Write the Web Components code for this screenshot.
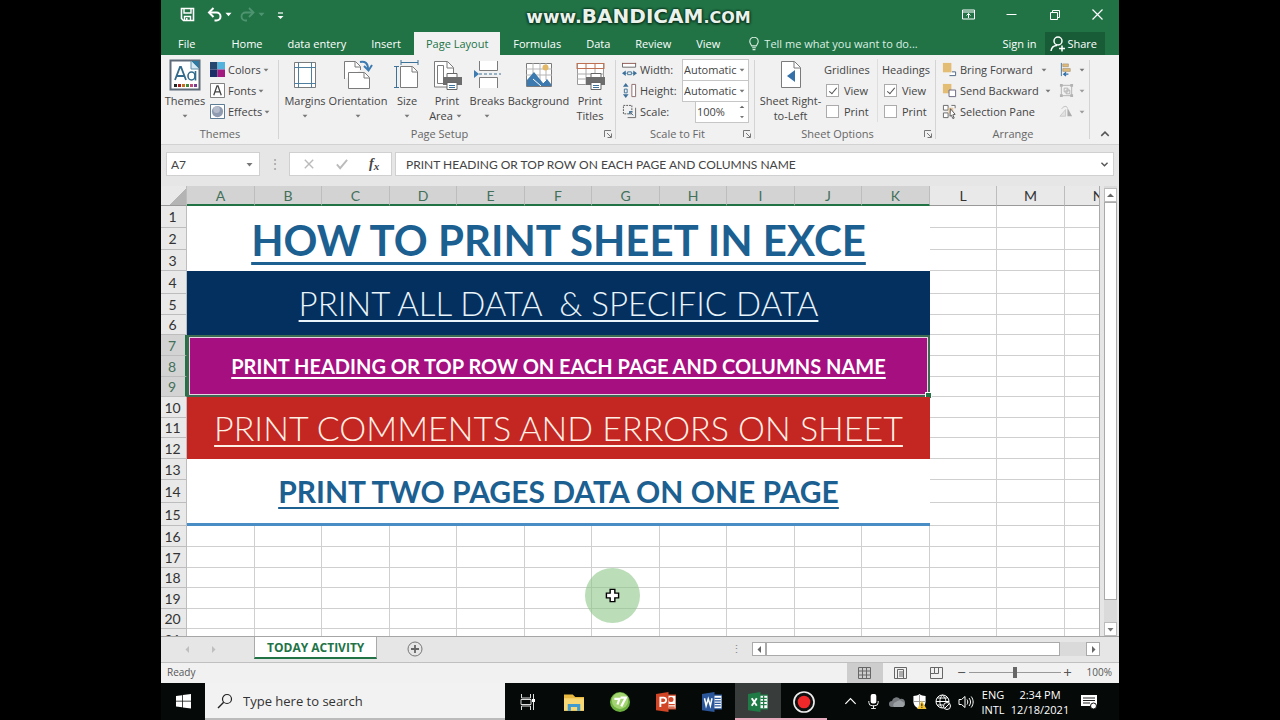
<!DOCTYPE html>
<html lang="en">
<head>
<meta charset="utf-8">
<title>Excel - Page Layout</title>
<style>
  html { background: #000; }
  body {
    margin: 0 auto;
    padding: 0 161px;
    height: 100vh;
    box-sizing: border-box;
    overflow: hidden;
    font: 11px/15px "Open Sans", "Noto Sans", sans-serif;
    color: #444;
    background: #000;
    --green: #217346;
    --line: #c6c6c6;
    --head: "Lato", "Open Sans", sans-serif;
  }
</style>
</head>
<body>
<xl-app></xl-app>

<script>
const ICONS = {
  save: `<path d="M1.500 1.500h12v12h-10l-2-2z" fill="none" stroke="#fff" stroke-width="1.600"/><path d="M4 2v4h7V2M4.500 13V9.500h6V13" fill="none" stroke="#fff" stroke-width="1.400"/><path d="M6 11h1.500v2H6z" fill="#fff"/>`,
  undo: `<path d="M2 5.500h7.500a4 4 0 0 1 0 8H7.500" fill="none" stroke="#fff" stroke-width="2"/><path d="M6.500 1L2 5.500 6.500 10" fill="none" stroke="#fff" stroke-width="2"/>`,
  redo: `<path d="M13 5.500H5.500a4 4 0 0 0 0 8H7" fill="none" stroke="#4f9470" stroke-width="1.800"/><path d="M9 1l4.500 4.500L9 10" fill="none" stroke="#4f9470" stroke-width="1.800"/>`,
  wcaret: `<path d="M4 5.500h7l-3.500 4z" fill="#fff"/>`,
  dimcaret: `<path d="M4 5.500h7l-3.500 4z" fill="#4f9470"/>`,
  custom: `<path d="M5 6h5" stroke="#fff" stroke-width="1.200"/><path d="M4.500 9h6l-3 3z" fill="#fff"/>`,
  ribbonopt: `<path d="M1.500 3h12v9h-12zM1.500 5h12" fill="none" stroke="#fff"/><path d="M7.500 11V6.500M5.500 8.500l2-2 2 2" fill="none" stroke="#fff"/>`,
  min: `<path d="M2.500 7.500h10" stroke="#fff"/>`,
  restore: `<path d="M3.500 5.500h7v7h-7z M5.500 5.500v-2h7v7h-2" fill="none" stroke="#fff"/>`,
  close: `<path d="M2.500 2.500l10 10M12.500 2.500l-10 10" stroke="#fff" stroke-width="1.200"/>`,
  bulb: `<path d="M5 9.500C4.500 8 3 7 3 4.800a4.500 4.500 0 0 1 9 0C12 7 10.500 8 10 9.500zM5.500 11.500h4M6 13.500h3" fill="none" stroke="#dcefe3" stroke-width="1.200"/>`,
  person: `<circle cx="8" cy="5" r="4" fill="none" stroke="#fff" stroke-width="1.500"/><path d="M1 15c.5-3.500 3-5.500 6-5.500M12 9.500v6M9 12.500h6" fill="none" stroke="#fff" stroke-width="1.500"/>`,
  themes: `<path d="M1.500 1.500h29v29h-29z" fill="#fff" stroke="#5f6b78" stroke-width="2"/><path d="M22 2h8v8z" fill="#2f7aa3"/><path d="M22 2v8h8" fill="#d7e9f3" stroke="#5f8fa8"/><path d="M6 21l5-13h1l5 13M8 17h7" fill="none" stroke="#336b8c" stroke-width="1.800"/><ellipse cx="22.500" cy="17" rx="3.500" ry="4" fill="none" stroke="#336b8c" stroke-width="1.600"/><path d="M26.500 12v9.500" stroke="#336b8c" stroke-width="1.600"/><path d="M5 25h3v3H5z" fill="#222"/><path d="M9 25h3v3H9z" fill="#a02020"/><path d="M13 25h3v3h-3z" fill="#c07020"/><path d="M17 25h3v3h-3z" fill="#3c8a3c"/><path d="M21 25h3v3h-3z" fill="#c04a80"/><path d="M25 25h3v3h-3z" fill="#7a3c90"/>`,
  colors: `<path d="M0 0h8v8H0z" fill="#24466f"/><path d="M8 0h8v8H8z" fill="#53b3dc"/><path d="M0 8h8v8H0z" fill="#1b2f66"/><path d="M8 8h8v8H8z" fill="#a3197f"/>`,
  fonts: `<path d="M.5.5h15v15H.5z" fill="#fff" stroke="#777"/><path d="M4 13L7.500 3h1L12 13M5.500 9.500h5" fill="none" stroke="#444" stroke-width="1.400"/>`,
  effects: `<path d="M.5.5h15v15H.5z" fill="#fff" stroke="#4d6f8c"/><circle cx="8" cy="8" r="6" fill="#8e9bb0"/><circle cx="7" cy="6" r="3.500" fill="#b4bccb"/>`,
  margins: `<path d="M5.500 3.500h21v25h-21z" fill="#fff" stroke="#7b7b7b"/><path d="M5 8.500h22M5 24.500h22M9.500 3v26M22.500 3v26" stroke="#4f7f9e"/>`,
  orient: `<path d="M2.500 20V2.500h11l5 5V11" fill="#fff" stroke="#7b7b7b"/><path d="M13 3v5h5" fill="none" stroke="#7b7b7b"/><path d="M6.500 13.500h16l5 5v11h-21z" fill="#fff" stroke="#7b7b7b"/><path d="M22 14v5h5" fill="none" stroke="#7b7b7b"/><path d="M18 3c5-1 8 1 8 7" fill="none" stroke="#3c7ab0" stroke-width="2"/><path d="M22 7l4.500 4.500L30 6" fill="none" stroke="#3c7ab0" stroke-width="2"/>`,
  size: `<path d="M9.500 7.500h12l5 5v16h-17z" fill="#fff" stroke="#7b7b7b"/><path d="M21 8v5h5" fill="none" stroke="#7b7b7b"/><path d="M10 3.500h17M10 1v5M27 1v5M5.500 7v22M3 7.500h5M3 28.500h5" stroke="#3f7298"/>`,
  printarea: `<path d="M3.500 2.500h13l6 6V28h-19z" fill="#fff" stroke="#7b7b7b"/><path d="M16 3v6h6M6.500 6.500v18h6v-18z" fill="none" stroke="#7b7b7b"/><path d="M16 14.500h10v5H16z" fill="#fff" stroke="#666"/><path d="M12 18h19v8H12z" fill="#6d6d6d"/><path d="M16 23.500h10v7H16z" fill="#fff" stroke="#666"/><path d="M18 26.500h6M18 28.500h6" stroke="#3f7298"/>`,
  breaks: `<path d="M8.500 2v9.500h18V2M8.500 29V18.500h18V29" fill="#fff" stroke="#7b7b7b"/><path d="M8 15h22" stroke="#3f7298" stroke-dasharray="3 2"/><path d="M3 11l5 4-5 4z" fill="#3c7ab0"/>`,
  background: `<path d="M3.500 4.500h25v23h-25z" fill="#fff" stroke="#7b7b7b"/><path d="M3 10h26M3 16h26M10 4v23M17 4v23M23 4v23" stroke="#b5b5b5"/><circle cx="22.500" cy="8.500" r="3" fill="#e2b866"/><path d="M4 27V21l7-8 9 11 4-4 4 5v2z" fill="#3c7ab0"/><path d="M20 24l3-3M10 20l8 7" stroke="#fff"/>`,
  titles: `<path d="M3.500 4.500h26v21h-26z" fill="#fff" stroke="#9a9a9a"/><path d="M3 9.500h27M3 4.500h27M3 4v6M12 4v6M21 4v6M30 4v6" stroke="#bd7152"/><path d="M3 15h27M3 20h27M12 10v16M21 10v16" stroke="#aaa"/><path d="M17 14.500h10v5H17z" fill="#fff" stroke="#666"/><path d="M12 18h19v8H12z" fill="#6d6d6d"/><path d="M17 23.500h10v7H17z" fill="#fff" stroke="#666"/><path d="M19 26.500h6M19 28.500h6" stroke="#3f7298"/>`,
  width: `<path d="M.5 1v4.500h14V1" fill="#fff" stroke="#666"/><path d="M0 1.500h15" stroke="#8d5a52"/><path d="M6 10.500h4v3H6zM1.500 12H5M11 12h3.500" fill="none" stroke="#3f7298"/><path d="M4 9l-4 3 4 3zM12 9l4 3-4 3z" fill="#3c6f99"/>`,
  height: `<path d="M10.500 1.500h4v13h-4z" fill="#fff" stroke="#8d6a6a"/><path d="M2.500 6.500h3v4h-3z" fill="none" stroke="#3f7298"/><path d="M4 0l3 4H1zM4 16l3-4H1z" fill="#3c6f99"/>`,
  scale: `<path d="M1.500 1.500h9v9h-9z" fill="none" stroke="#555" stroke-dasharray="2 1"/><path d="M6 14.500h8.500V4" fill="none" stroke="#666"/><path d="M8 8l4 4M8 11V8h3" fill="none" stroke="#3f7298"/>`,
  rtl: `<path d="M6.500 2.500h13l6 6v20h-19z" fill="#fff" stroke="#7b7b7b"/><path d="M19 3v6h6" fill="none" stroke="#7b7b7b"/><path d="M20 11v12l-8-6z" fill="#3570a8"/>`,
  forward: `<path d="M10.500 10.500h4v4H8" fill="#fff" stroke="#4c6480"/><path d="M1 1h9v10H1z" fill="#e3bd74"/>`,
  backward: `<path d="M1 1h9v10H1z" fill="#e3bd74"/><path d="M7.500 7.500h7v7h-7z" fill="#fff" stroke="#6b6280"/>`,
  selpane: `<path d="M1.500 1.500h5v5h-5zM1.500 9.500h5v5h-5zM10 1.500h4v3" fill="#fff" stroke="#666"/><path d="M7 4h5v6H7z" fill="#e9c79a"/><path d="M9 5l5 6-2.500.5L13 15l-1.500.5-1.500-3.500L8.500 13z" fill="#fff" stroke="#555"/>`,
  align: `<path d="M2.500 1v14" stroke="#3f7298"/><path d="M4 2h6v3H4zM4 7h8v3H4z" fill="#e0bb7a" stroke="#9a8a6c" stroke-width=".6"/><path d="M10 13H5M7.500 11L5 13l2.500 2" fill="none" stroke="#2f6fa8" stroke-width="1.300"/>`,
  group: `<path d="M2.500 2.500h11v11h-11zM5.500 5.500h4v4h-4zM7.500 7.500h4v4h-4z" fill="none" stroke="#999"/><path d="M1 1h3v3H1zM12 1h3v3h-3zM1 12h3v3H1zM12 12h3v3h-3z" fill="#999"/>`,
  rotate: `<path d="M1 13l6-7v7z" fill="#ddd" stroke="#bbb"/><path d="M9 4l5 9H9z" fill="#909090"/><path d="M3 5c2-3 5-3 6-1" fill="none" stroke="#a0a0a0"/>`,
  launcher: `<path d="M1.500 8V1.500H8" fill="none" stroke="#777"/><path d="M4 4l4 4M8.500 4.500v4h-4" fill="none" stroke="#777"/>`,
  up: `<path d="M3.500 9.500l4-4 4 4" fill="none" stroke="#555" stroke-width="1.600"/>`,
  down: `<path d="M4 5.500l3.500 3.500L11 5.500" fill="none" stroke="#555" stroke-width="1.600"/>`,
  caret: `<path d="M4.500 6h6l-3 3.500z" fill="#777"/>`,
  tup: `<path d="M4 9h7L7.500 5.500z" fill="#666"/>`,
  tleft: `<path d="M9 4v7L5.500 7.500z" fill="#666"/>`,
  tright: `<path d="M6 4v7l3.500-3.500z" fill="#666"/>`,
  cross: `<path d="M3 3l9 9M12 3l-9 9" stroke="#bbb" stroke-width="1.500"/>`,
  tick: `<path d="M2 8l3.500 4L13 3" fill="none" stroke="#bbb" stroke-width="2"/>`,
  plus: `<circle cx="8" cy="8" r="7" fill="none" stroke="#777"/><path d="M8 4v8M4 8h8" stroke="#666" stroke-width="1.800"/>`,
  normal: `<path d="M1.500 2.500h12v11h-12zM1 6h13M1 10h13M5.500 2v12M9.500 2v12" fill="none" stroke="#666"/>`,
  page: `<path d="M1.500 2.500h12v11h-12zM4.500 4.500h6v9h-6zM6 7h4M6 9h4M6 11h4" fill="none" stroke="#666"/>`,
  pbreak: `<path d="M1.500 2.500h12v11h-12zM5.500 2v6.500h-4M9.500 2v6.500h-4" fill="none" stroke="#666"/>`,
  windows: `<path d="M0 2.200l6.500-1v6H0zM7.300 1L16 0v7.200H7.300zM0 8h6.500v6.200l-6.500-1zM7.300 8H16v7.500l-8.700-1.200z" fill="#fff"/>`,
  search: `<circle cx="10" cy="6" r="4.500" fill="none" stroke="#222" stroke-width="1.200"/><path d="M6.700 9.300L1 15" stroke="#222" stroke-width="1.400"/>`,
  taskview: `<path d="M1.500 0v4h9V0M1.500 16v-4h9v4M1 5.500h10v5H1zM13.500 0v16" fill="none" stroke="#ddd"/><path d="M12 5h3v3h-3z" fill="#fff"/>`,
  folder: `<path d="M0 2h7l2 2h7v11H0z" fill="#e9b93f"/><path d="M0 5h16v10H0z" fill="#f8d775"/><path d="M3 15V9.500h10V15h-2.500v-3h-5v3z" fill="#3f9bd0"/>`,
  cam: `<circle cx="8" cy="8" r="8" fill="#6db13f"/><circle cx="8" cy="7" r="6.500" fill="#a4d472"/><path d="M3.500 5.500h4L6 10M8.500 4.500h4.200L9 11.500" fill="none" stroke="#fff" stroke-width="1.800"/>`,
  ppt: `<path d="M8 2.500h8v11H8z" fill="#fff" stroke="#d04525"/><circle cx="12" cy="6" r="2" fill="#d04525"/><path d="M10 10h5M10 12h5" stroke="#d04525"/><path d="M0 1.500L10 0v16L0 14.500z" fill="#d04525"/><path d="M3.500 12V4.500H6a2 2 0 0 1 0 4.200H3.500" fill="none" stroke="#fff" stroke-width="1.500"/>`,
  word: `<path d="M8 2.500h8v11H8z" fill="#fff" stroke="#2b579a"/><path d="M10 5h5M10 7h5M10 9h5M10 11h5" stroke="#2b579a"/><path d="M0 1.500L10 0v16L0 14.500z" fill="#2b579a"/><path d="M2 5l1.300 6L5 5.500 6.700 11 8 5" fill="none" stroke="#fff" stroke-width="1.200"/>`,
  excel: `<path d="M8 2.500h8v11H8z" fill="#fff" stroke="#1f7a45"/><path d="M10 5h5M10 7.500h5M10 10h5M12.500 3v10" stroke="#1f7a45"/><path d="M0 1.500L10 0v16L0 14.500z" fill="#1f7a45"/><path d="M3 5l4 6M7 5l-4 6" stroke="#fff" stroke-width="1.500"/>`,
  record: `<circle cx="8" cy="8" r="7.300" fill="#111" stroke="#eee" stroke-width="1.200"/><circle cx="8" cy="8" r="4.600" fill="#f0282a"/>`,
  chevron: `<path d="M2.500 10.500L8 5l5.500 5.500" fill="none" stroke="#fff" stroke-width="1.300"/>`,
  mic: `<rect x="5" y="0" width="6" height="10" rx="2" fill="#fff"/><path d="M3 7.500v1.500a3.500 3.500 0 0 0 3.500 3.500h3A3.500 3.500 0 0 0 13 9V7.500M8 12.500V15M5.500 15.500h5" fill="none" stroke="#fff"/>`,
  cloud: `<path d="M3 13a3 3 0 0 1 0-6 4.500 4.500 0 0 1 8-2 4 4 0 0 1 2 8z" fill="#777b80"/><path d="M5 13a3 3 0 0 1 2-5 4 4 0 0 1 6-.5 3 3 0 0 1 1 5.500z" fill="#9ba0a4"/>`,
  shield: `<path d="M8 0c2 1.500 4 2 6.500 2v6c0 4-3 6.500-6.500 8-3.500-1.500-6.500-4-6.500-8V2C4 2 6 1.500 8 0z" fill="#fff"/><path d="M8 1v14M2 8h12" stroke="#999"/><path d="M10.500 7l5 9h-10z" fill="#f4c331"/><path d="M10.500 10v3M10.500 14v1" stroke="#222" stroke-width="1.200"/>`,
  globe: `<circle cx="7.500" cy="7.500" r="6.500" fill="none" stroke="#fff"/><path d="M1 7.500h13M7.500 1C4 4 4 11 7.500 14M7.500 1c3.500 3 3.500 6 3 7M2.500 4h10M2.500 11H8" fill="none" stroke="#fff"/><circle cx="12" cy="12" r="3.500" fill="#111" stroke="#fff"/><path d="M9.800 14.200l4.400-4.400" stroke="#fff"/>`,
  sound: `<path d="M1 5.500h2.500L7 2.500v11l-3.500-3H1zM9 5.500c1 1.500 1 3.500 0 5M11 4c2 2.500 2 5.500 0 8M13.200 2.500c2.600 3.500 2.600 7.500 0 11" fill="none" stroke="#fff"/>`,
  notes: `<path d="M0 1h16v11h-2l-3 3v-3H0z" fill="#fff"/><path d="M2 4h12M2 6.500h12M2 9h7" stroke="#222"/><circle cx="12.500" cy="12" r="3" fill="#fff" stroke="#111"/>`,
  cell: `<path d="M5.500 1.500h5v4h4v5h-4v4h-5v-4h-4v-5h4z" fill="#fff" stroke="#000" stroke-width="1.500"/>`
};

// each component is a shadow root filled from one template string
function define(name, template) {
  window.customElements.define(name, class extends HTMLElement {
    constructor() {
      super();
      this.attachShadow({mode: 'open'});
    }
    connectedCallback() {
      this.shadowRoot.innerHTML = typeof template == 'function' ? template(this) : template;
    }
  });
}

const BUTTON = `
  button {
    font: inherit; color: inherit; background: none; border: 0; margin: 0; padding: 0;
    display: flex; align-items: center; justify-content: center; cursor: pointer; white-space: nowrap;
  }`;

define('x-icon', el => {
  const size = el.getAttribute('size') || 15;
  const box = el.getAttribute('box') || 15;
  return `
  <style>
    :host { display: inline-flex; flex: none; }
    svg { display: block; }
  </style>
  <svg width="${size}" height="${size}" viewBox="0 0 ${box} ${box}" aria-hidden="true">${ICONS[el.getAttribute('name')]}</svg>`;
});

define('xl-titlebar', `
  <style>
    :host { display: grid; grid-template-columns: 1fr auto 1fr; align-items: start; height: 32px; background: var(--green); color: #fff; }
    ${BUTTON}
    .side { display: flex; align-items: center; height: 28px; }
    .quick { padding-left: 19px; }
    .first { margin-right: 7px; }
    .gap { margin-left: 5px; }
    .window { justify-content: flex-end; }
    .window button { width: 43px; height: 28px; }
    .mark {
      font: bold 20px/32px "DejaVu Sans", sans-serif; color: #e9f3ec; white-space: nowrap;
      padding-right: 3px;
      text-shadow: 0 0 3px #0b2d19, 0 1px 3px #0b2d19, 0 0 2px #0b2d19;
    }
    .mark span { font-size: 18px; }
    .mark small { font-size: 16px; }
  </style>
  <div class="side quick">
    <button class="first" aria-label="Save"><x-icon name="save"></x-icon></button>
    <button class="gap" aria-label="Undo"><x-icon name="undo"></x-icon><x-icon name="wcaret" size="13"></x-icon></button>
    <button class="gap" aria-label="Redo"><x-icon name="redo"></x-icon><x-icon name="dimcaret" size="13"></x-icon></button>
    <button class="gap" aria-label="Customize Quick Access Toolbar"><x-icon name="custom"></x-icon></button>
  </div>
  <div class="mark"><span>www.</span>BANDICAM<small>.COM</small></div>
  <div class="side window">
    <button aria-label="Ribbon Display Options"><x-icon name="ribbonopt"></x-icon></button>
    <button aria-label="Minimize"><x-icon name="min"></x-icon></button>
    <button aria-label="Restore Down"><x-icon name="restore"></x-icon></button>
    <button aria-label="Close"><x-icon name="close"></x-icon></button>
  </div>`);

define('xl-tabs', `
  <style>
    :host { display: flex; height: 23px; background: var(--green); color: #fff; padding: 0 14px 0 5px; }
    ${BUTTON}
    nav { display: flex; gap: 1px; flex: 1; }
    nav button { padding: 0 12px; }
    nav .file { padding-right: 23px; }
    nav .on { background: #f1f1f1; color: var(--green); }
    nav .tell { padding: 0; margin-left: 14px; gap: 3px; color: #dcefe3; }
    .share { background: #185c37; padding: 0 8px 0 5px; margin-left: 9px; gap: 1px; }
  </style>
  <nav>
    <button class="file">File</button>
    <button>Home</button>
    <button>data entery</button>
    <button>Insert</button>
    <button class="on">Page Layout</button>
    <button>Formulas</button>
    <button>Data</button>
    <button>Review</button>
    <button>View</button>
    <button class="tell"><x-icon name="bulb" size="14"></x-icon>Tell me what you want to do...</button>
  </nav>
  <button>Sign in</button>
  <button class="share"><x-icon name="person" size="16" box="16"></x-icon>Share</button>`);

define('xl-group', el => `
  <style>
    :host { display: flex; flex-direction: column; box-sizing: border-box; flex: none; position: relative; }
    .body { display: flex; height: 67px; padding-top: 4px; }
    footer { display: flex; height: 15px; align-items: center; color: #666; }
    footer span { flex: 1; text-align: center; }
    :host::after { content: ""; position: absolute; right: 0; top: 5px; bottom: 5px; border-right: 1px solid #d4d4d4; }
    ${BUTTON}
    button { padding: 0 3px; }
  </style>
  <div class="body"><slot></slot></div>
  <footer><span>${el.getAttribute('label')}</span>${el.hasAttribute('launcher')
    ? `<button aria-label="${el.getAttribute('label')} settings"><x-icon name="launcher" size="10" box="10"></x-icon></button>` : ''}</footer>`);

define('xl-big', el => `
  <style>
    :host { display: block; flex: none; }
    ${BUTTON}
    button { flex-direction: column; width: 100%; justify-content: flex-start; }
    x-icon { margin-bottom: 2px; }
    .two { display: flex; align-items: center; height: 15px; }
    .two x-icon { margin: 0; }
  </style>
  <button>
    <x-icon name="${el.getAttribute('icon')}" size="32" box="32"></x-icon>
    <slot></slot>
    <span class="two"><slot name="second"></slot>${el.hasAttribute('caret') ? '<x-icon name="caret" size="12"></x-icon>' : ''}</span>
  </button>`);

define('xl-small', el => `
  <style>
    :host { display: flex; height: 21px; ${el.hasAttribute('disabled') ? 'opacity: .7;' : ''} }
    ${BUTTON}
    button { gap: 3px; }
    .caret { margin-left: var(--caret-gap, -4px); }
  </style>
  <button>
    <x-icon name="${el.getAttribute('icon')}" box="16"></x-icon>
    <span><slot></slot></span>
    ${el.hasAttribute('caret') ? '<x-icon class="caret" name="caret" size="12"></x-icon>' : ''}
  </button>`);

define('xl-fit', el => {
  const field = el.getAttribute('kind') == 'spin'
    ? `<span class="box spin"><input id="f" value="100%"><span class="arrows"><x-icon name="tup" size="10"></x-icon><x-icon name="caret" size="10"></x-icon></span></span>`
    : `<span class="box"><select id="f"><option>Automatic</option></select><x-icon class="drop" name="caret" size="12"></x-icon></span>`;
  return `
  <style>
    :host { display: flex; align-items: center; height: 21px; }
    label { display: flex; align-items: center; gap: 3px; flex: 1; }
    .box { display: flex; align-items: center; box-sizing: border-box; width: 67px; height: 22px; background: #fff; border: 1px solid var(--line); }
    .spin { width: 54px; }
    .drop { margin-left: -4px; }
    select, input {
      appearance: none; flex: 1; min-width: 0; font: inherit; color: inherit; background: none;
      border: 0; padding: 0 0 0 1px; margin: 0; outline: 0;
    }
    .arrows { display: flex; flex-direction: column; padding-right: 1px; }
  </style>
  <label for="f"><x-icon name="${el.getAttribute('icon')}" box="16"></x-icon>${el.getAttribute('label')}</label>${field}`;
});

define('xl-check', el => `
  <style>
    :host { display: block; }
    label { display: flex; align-items: center; gap: 5px; height: 21px; }
    input {
      appearance: none; width: 13px; height: 13px; box-sizing: border-box; margin: 0;
      border: 1px solid #ababab; background: #fff; display: grid; place-items: center;
    }
    input:checked::after {
      content: ""; width: 3px; height: 7px; margin-bottom: 2px; border: solid #555; border-width: 0 1px 1px 0; transform: rotate(40deg);
    }
  </style>
  <label><input type="checkbox" ${el.hasAttribute('checked') ? 'checked' : ''}><slot></slot></label>`);

define('xl-ribbon', `
  <style>
    :host { display: flex; height: 89px; background: #f1f1f1; border-bottom: 1px solid #d2d2d2; }
    .col { display: flex; flex-direction: column; }
    .themes { width: 118px; }
    .setup { width: 337px; }
    .fit { width: 139px; }
    .sheet { width: 181px; }
    .arrange { width: 154px; }
    .w40 { width: 40px; } .w48 { width: 48px; } .w58 { width: 58px; } .w63 { width: 63px; }
    .pad { margin-left: 2px; }
    .rtl { margin-left: 4px; }
    .pick { padding-left: 1px; }
    .fields { flex: 1; padding: 0 6px; }
    .opt { padding-left: 6px; border-left: 1px solid #dedede; height: 63px; width: 49px; }
    .opt.first { border: 0; padding-left: 4px; width: 51px; }
    .opt span { height: 21px; line-height: 21px; margin-left: -2px; }
    .order { padding-left: 6px; width: 117px; --caret-gap: 0; }
    .more { flex: 1; }
    .fold { flex: 1; display: flex; align-items: flex-end; justify-content: center; padding-bottom: 3px; }
    ${BUTTON}
  </style>
  <xl-group class="themes" label="Themes">
    <xl-big class="w48" icon="themes" caret>Themes</xl-big>
    <div class="col pick">
      <xl-small icon="colors" caret>Colors</xl-small>
      <xl-small icon="fonts" caret>Fonts</xl-small>
      <xl-small icon="effects" caret>Effects</xl-small>
    </div>
  </xl-group>
  <xl-group class="setup" label="Page Setup" launcher>
    <xl-big class="w48 pad" icon="margins" caret>Margins</xl-big>
    <xl-big class="w58" icon="orient" caret>Orientation</xl-big>
    <xl-big class="w40" icon="size" caret>Size</xl-big>
    <xl-big class="w40" icon="printarea" caret>Print<span slot="second">Area</span></xl-big>
    <xl-big class="w40" icon="breaks" caret>Breaks</xl-big>
    <xl-big class="w63" icon="background">Background</xl-big>
    <xl-big class="w40" icon="titles">Print<span slot="second">Titles</span></xl-big>
  </xl-group>
  <xl-group class="fit" label="Scale to Fit" launcher>
    <div class="col fields">
      <xl-fit icon="width" label="Width:"></xl-fit>
      <xl-fit icon="height" label="Height:"></xl-fit>
      <xl-fit icon="scale" label="Scale:" kind="spin"></xl-fit>
    </div>
  </xl-group>
  <xl-group class="sheet" label="Sheet Options" launcher>
    <xl-big class="w63 rtl" icon="rtl">Sheet Right-<span slot="second">to-Left</span></xl-big>
    <div class="col opt first">
      <span>Gridlines</span>
      <xl-check checked>View</xl-check>
      <xl-check>Print</xl-check>
    </div>
    <div class="col opt">
      <span>Headings</span>
      <xl-check checked>View</xl-check>
      <xl-check>Print</xl-check>
    </div>
  </xl-group>
  <xl-group class="arrange" label="Arrange">
    <div class="col order">
      <xl-small icon="forward" caret>Bring Forward&nbsp;</xl-small>
      <xl-small icon="backward" caret>Send Backward</xl-small>
      <xl-small icon="selpane">Selection Pane</xl-small>
    </div>
    <div class="col more">
      <xl-small icon="align" caret></xl-small>
      <xl-small icon="group" caret disabled></xl-small>
      <xl-small icon="rotate" caret disabled></xl-small>
    </div>
  </xl-group>
  <div class="fold"><button aria-label="Collapse the Ribbon"><x-icon name="up" size="14"></x-icon></button></div>`);

define('xl-formula', `
  <style>
    :host { display: flex; height: 24px; padding: 7px 5px 10px; background: #e6e6e6; font-family: var(--head); font-size: 12px; }
    ${BUTTON}
    .box { display: flex; align-items: center; box-sizing: border-box; background: #fff; border: 1px solid #d0d0d0; padding: 0 2px; }
    .name { width: 94px; }
    .dots { width: 29px; text-align: center; line-height: 24px; color: #999; }
    .tools { width: 103px; justify-content: space-around; }
    .text { flex: 1; margin-left: 3px; }
    .text input { padding-left: 8px; }
    input { flex: 1; min-width: 0; border: 0; outline: 0; background: none; padding: 0 2px; font: inherit; color: inherit; }
    i { font: italic bold 14px "Liberation Serif", serif; }
    sub { font-size: 11px; vertical-align: -2px; }
  </style>
  <div class="box name"><input aria-label="Name Box" value="A7"><x-icon name="caret"></x-icon></div>
  <span class="dots">⋮</span>
  <div class="box tools">
    <button aria-label="Cancel"><x-icon name="cross" size="14"></x-icon></button>
    <button aria-label="Enter"><x-icon name="tick" size="14"></x-icon></button>
    <button aria-label="Insert Function"><i>f<sub>x</sub></i></button>
  </div>
  <div class="box text">
    <input aria-label="Formula Bar" value="PRINT HEADING OR TOP ROW ON EACH PAGE AND COLUMNS NAME">
    <button aria-label="Expand Formula Bar"><x-icon name="down" size="13"></x-icon></button>
  </div>`);

const BANDS = {
  1: ['title', 'HOW TO PRINT SHEET IN EXCE'],
  4: ['navy', 'PRINT ALL DATA&nbsp; &amp; SPECIFIC DATA'],
  7: ['purple', 'PRINT HEADING OR TOP ROW ON EACH PAGE AND COLUMNS NAME'],
  10: ['red', 'PRINT COMMENTS AND ERRORS ON SHEET'],
  13: ['last', 'PRINT TWO PAGES DATA ON ONE PAGE']
};
const HEIGHTS = [22, 22, 21, 23, 21, 20, 21, 21, 20, 21, 20, 21, 21, 23, 23, 21, 21, 20, 21, 20, 21];

function sheetRows() {
  return HEIGHTS.map((h, i) => {
    const row = i + 1;
    const band = BANDS[row];
    let cells = '';
    if (band) cells += `<td class="band ${band[0]}" colspan="11" rowspan="3"><span>${band[1]}</span></td>`;
    cells += '<td></td>'.repeat(row > 15 ? 14 : 3);
    return `<tr style="height:${h}px"><th scope="row" class="${row > 6 && row < 10 ? 'on' : ''}">${row}</th>${cells}</tr>`;
  }).join('');
}

define('xl-sheet', `
  <style>
    :host { display: flex; flex: 1; min-height: 0; background: #e6e6e6; padding-right: 2px; }
    .view { flex: 1; min-width: 0; overflow: hidden; position: relative; background: #fff; border-right: 1px solid #aaa; }
    table { table-layout: fixed; width: 971px; border-collapse: separate; border-spacing: 0; font: 14px/17px var(--head); }
    .rowhead { width: 26px; }
    .odd { width: 68px; }
    .even { width: 67px; }
    th, td { box-sizing: border-box; padding: 0; border: solid #cfcfcf; border-width: 0 1px 1px 0; }
    th { font-weight: 400; background: #e9e9e9; color: #333; border-color: #bdbdbd; }
    thead tr { height: 20px; }
    thead th { border-bottom: 1px solid #999; }
    thead th.on { background: #d3d3d3; color: #44705a; border-bottom: 2px solid var(--green); }
    tbody th { padding-right: 2px; }
    tbody th.on { background: #d3d3d3; color: #44705a; border-right: 2px solid var(--green); }
    .corner { background: linear-gradient(135deg, #e9e9e9 62%, #b4b4b4 62%); }
    .band { text-align: center; border: 0; position: relative; white-space: nowrap; line-height: 1; }
    .band span { text-decoration: underline; text-decoration-skip-ink: none; }
    .title { color: #1b6091; font-weight: 700; font-size: 42px; padding-top: 2px; }
    .title span { text-underline-offset: 6px; text-decoration-thickness: 3px; }
    .navy { background: #04305f; color: #e9f4fb; font-weight: 300; font-size: 33px; }
    .red { background: #c42622; color: #fff0e6; font-weight: 300; font-size: 34px; }
    .navy span, .red span { text-underline-offset: 4px; text-decoration-thickness: 2px; }
    .purple { background: #a50f7f; color: #fff; font-weight: 700; font-size: 20px; box-shadow: inset 0 0 0 2px #3c6b52, inset 0 0 0 3px #e8d5e4; }
    .purple span { text-underline-offset: 3px; text-decoration-thickness: 2px; }
    .purple::after { content: ""; position: absolute; right: -2px; bottom: -2px; width: 5px; height: 5px; background: var(--green); border: 1px solid #fff; }
    .last { color: #1b6091; font-weight: 700; font-size: 30px; border-bottom: 3px solid #4a8cc4; }
    .last span { text-underline-offset: 4px; text-decoration-thickness: 2px; }
    .pointer {
      position: absolute; left: 424px; top: 382px; width: 55px; height: 55px; border-radius: 50%;
      background: rgba(137, 196, 133, .58); display: grid; place-items: center;
    }
    .scroll { width: 13px; margin-left: 4px; display: flex; flex-direction: column; padding-top: 2px; background: #dadada; }
    ${BUTTON}
    .scroll button { height: 14px; background: #fff; border: 1px solid #bbb; }
    .thumb { flex: 1; background: #fff; border: 1px solid #aaa; margin-bottom: 22px; }
  </style>
  <div class="view">
    <table>
      <colgroup><col class="rowhead">${'<col class="odd"><col class="even">'.repeat(7)}</colgroup>
      <thead><tr><th class="corner"></th>${[...'ABCDEFGHIJKLMN'].map((c, i) => `<th scope="col" class="${i < 11 ? 'on' : ''}">${c}</th>`).join('')}</tr></thead>
      <tbody>${sheetRows()}</tbody>
    </table>
    <div class="pointer"><x-icon name="cell" size="15" box="16"></x-icon></div>
  </div>
  <div class="scroll">
    <button aria-label="Scroll up"><x-icon name="tup" size="15"></x-icon></button>
    <div class="thumb"></div>
    <button aria-label="Scroll down"><x-icon name="caret" size="15"></x-icon></button>
  </div>`);

define('xl-sheettabs', `
  <style>
    :host { display: flex; height: 25px; background: #e6e6e6; border-top: 1px solid #a6a6a6; padding-right: 19px; align-items: flex-start; }
    ${BUTTON}
    .nav { width: 93px; height: 24px; display: flex; align-items: center; gap: 11px; padding-left: 19px; box-sizing: border-box; opacity: .3; }
    .tab { height: 22px; padding: 0 12px; background: #fff; color: var(--green); font-size: 12px; font-weight: 700; border: solid #aaa; border-width: 0 1px; border-bottom: 2px solid var(--green); }
    .add { margin: 4px 0 0 30px; }
    .dots { margin-left: auto; width: 31px; text-align: center; line-height: 24px; color: #888; }
    .bar { width: 348px; height: 14px; margin-top: 5px; display: flex; background: #dadada; }
    .bar button { width: 14px; box-sizing: border-box; background: #fff; border: 1px solid #aaa; }
    .thumb { flex: 1; background: #fff; border: 1px solid #aaa; margin-right: 26px; }
  </style>
  <div class="nav"><x-icon name="tleft"></x-icon><x-icon name="tright"></x-icon></div>
  <button class="tab">TODAY ACTIVITY</button>
  <button class="add" aria-label="New sheet"><x-icon name="plus" size="16" box="16"></x-icon></button>
  <span class="dots">⋮</span>
  <div class="bar">
    <button aria-label="Scroll left"><x-icon name="tleft" size="15"></x-icon></button>
    <div class="thumb"></div>
    <button aria-label="Scroll right"><x-icon name="tright" size="15"></x-icon></button>
  </div>`);

define('xl-status', `
  <style>
    :host { display: flex; height: 20px; background: #f1f1f1; border-top: 1px solid #c0c0c0; padding: 0 7px 0 6px; align-items: stretch; color: #555; line-height: 18px; font-size: 10px; }
    ${BUTTON}
    .ready { flex: 1; }
    .view { width: 36px; }
    .view x-icon { margin-bottom: 2px; }
    .view.on { background: #cdcdcd; }
    .step { width: 14px; font-size: 15px; padding-bottom: 2px; }
    input { appearance: none; width: 92px; height: 18px; margin: 0; background: none; }
    input::-webkit-slider-runnable-track { height: 11px; background: linear-gradient(#999, #999) center/100% 1px no-repeat; }
    input::-webkit-slider-thumb { appearance: none; width: 4px; height: 11px; background: #666; }
    .pct { margin-left: 12px; }
  </style>
  <span class="ready">Ready</span>
  <button class="view on" aria-label="Normal"><x-icon name="normal"></x-icon></button>
  <button class="view" aria-label="Page Layout"><x-icon name="page"></x-icon></button>
  <button class="view" aria-label="Page Break Preview"><x-icon name="pbreak"></x-icon></button>
  <button class="step" aria-label="Zoom out">−</button>
  <input type="range" aria-label="Zoom" min="0" max="100" value="50">
  <button class="step" aria-label="Zoom in">+</button>
  <span class="pct">100%</span>`);

define('win-taskbar', `
  <style>
    :host { display: flex; height: 37px; background: #050908; color: #fff; }
    ${BUTTON}
    .start { width: 44px; }
    .search { width: 300px; background: #f2f2f2; box-sizing: border-box; display: flex; align-items: center; gap: 10px; padding-left: 12px; border-bottom: 2px solid #bbb; color: #333; }
    .search input { flex: 1; min-width: 0; border: 0; outline: 0; background: none; padding: 0; font: 13px "Open Sans", sans-serif; color: #333; }
    .search input::placeholder { color: #333; opacity: 1; }
    .app { width: 46px; box-sizing: border-box; border: solid transparent; border-width: 2px 0; }
    .app.on { background: #383c3a; }
    .app.run { border-bottom-color: #e9a9bd; }
    .tray { display: flex; align-items: center; margin-left: auto; }
    .tray button { width: 23px; height: 37px; }
    .lang { width: 32px; text-align: center; }
    .clock { width: 62px; text-align: center; }
    .tray .notes { width: 36px; margin-right: 12px; }
  </style>
  <button class="start" aria-label="Start"><x-icon name="windows" box="16"></x-icon></button>
  <label class="search"><x-icon name="search" size="16" box="16"></x-icon><input placeholder="Type here to search" aria-label="Search"></label>
  <button class="app" aria-label="Task View"><x-icon name="taskview" size="16" box="16"></x-icon></button>
  <button class="app" aria-label="File Explorer"><x-icon name="folder" size="20" box="16"></x-icon></button>
  <button class="app" aria-label="Camtasia"><x-icon name="cam" size="20" box="16"></x-icon></button>
  <button class="app" aria-label="PowerPoint"><x-icon name="ppt" size="20" box="16"></x-icon></button>
  <button class="app" aria-label="Word"><x-icon name="word" size="20" box="16"></x-icon></button>
  <button class="app on run" aria-label="Excel"><x-icon name="excel" size="20" box="16"></x-icon></button>
  <button class="app run" aria-label="Recorder"><x-icon name="record" size="22" box="16"></x-icon></button>
  <div class="tray">
    <button aria-label="Show hidden icons"><x-icon name="chevron" box="16"></x-icon></button>
    <button aria-label="Microphone"><x-icon name="mic" box="16"></x-icon></button>
    <button aria-label="OneDrive"><x-icon name="cloud" size="16" box="16"></x-icon></button>
    <button aria-label="Security"><x-icon name="shield" box="16"></x-icon></button>
    <button aria-label="Network"><x-icon name="globe" size="16" box="16"></x-icon></button>
    <button aria-label="Volume"><x-icon name="sound" size="16" box="16"></x-icon></button>
    <div class="lang">ENG<br>INTL</div>
    <div class="clock">2:34 PM<br>12/18/2021</div>
    <button class="notes" aria-label="Notifications"><x-icon name="notes" size="16" box="16"></x-icon></button>
  </div>`);

define('xl-app', `
  <style>
    :host { display: flex; flex-direction: column; height: 100%; background: #e6e6e6; }
    xl-titlebar, xl-tabs, xl-ribbon, xl-formula, xl-sheettabs, xl-status, win-taskbar { flex: none; }
  </style>
  <xl-titlebar></xl-titlebar>
  <xl-tabs></xl-tabs>
  <xl-ribbon></xl-ribbon>
  <xl-formula></xl-formula>
  <xl-sheet></xl-sheet>
  <xl-sheettabs></xl-sheettabs>
  <xl-status></xl-status>
  <win-taskbar></win-taskbar>`);
</script>
</body>
</html>
